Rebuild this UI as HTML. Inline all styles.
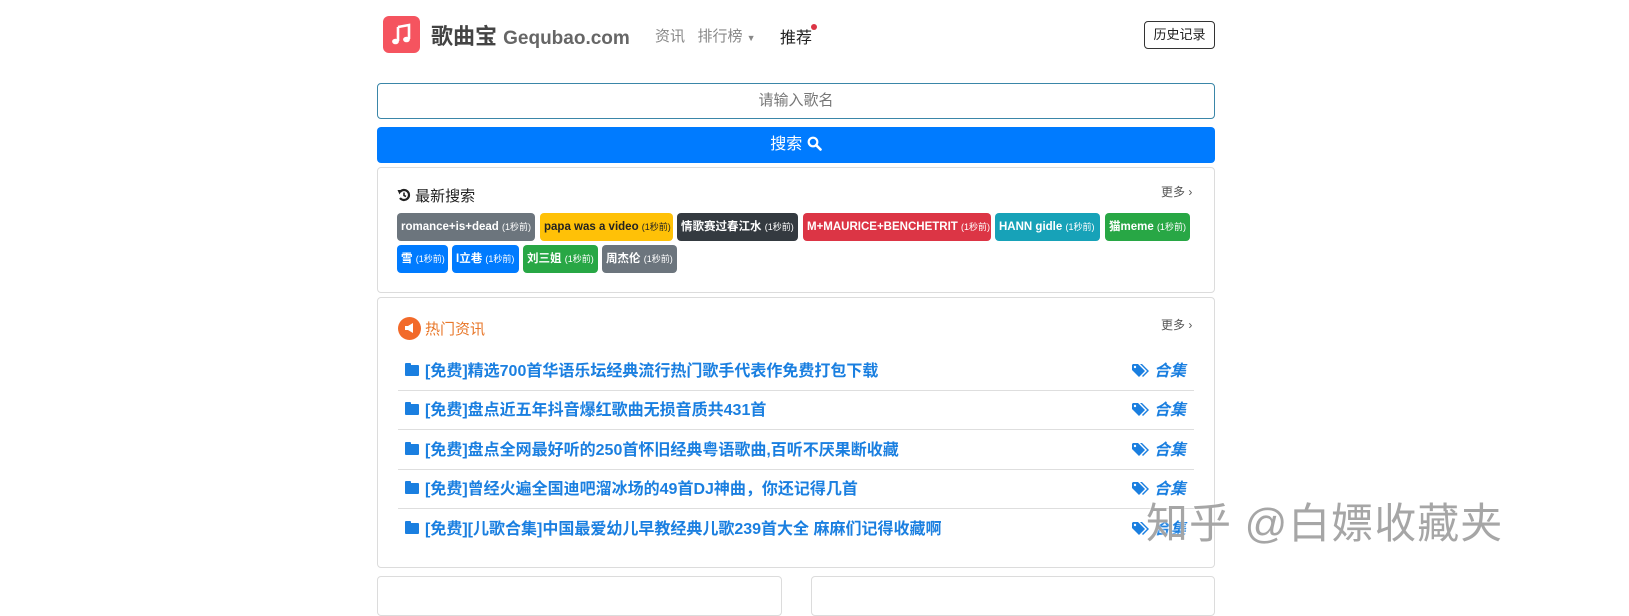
<!DOCTYPE html><html><head><meta charset="utf-8"><style>
*{margin:0;padding:0;box-sizing:border-box}
body{width:1629px;height:604px;background:#fff;font-family:"Liberation Sans","Noto Sans CJK SC",sans-serif;position:relative;overflow:hidden}
.a{position:absolute}
.card{position:absolute;border:1px solid #dcdcdc;border-radius:4px;background:#fff}
.tag{position:absolute;height:28px;border-radius:4px;color:#fff;font-size:11.5px;font-weight:bold;line-height:28px;padding-left:4px;white-space:nowrap;overflow:hidden}
.tag small{font-size:9px;font-weight:normal}
.row{position:absolute;left:398px;width:796px;height:39px;border-bottom:1px solid #dedede;color:#1a7fe0;font-weight:bold;font-size:16px;line-height:39px}
.row .r{position:absolute;right:8px;top:0;font-style:italic}
.row .r svg{vertical-align:-2px;margin-right:4px}
.fold{display:inline-block;width:14px;height:11px;background:#1a7fe0;border-radius:1px;margin:0 6px 0 7px;position:relative;top:0px}
.fold:before{content:"";position:absolute;left:0;top:-2px;width:6px;height:3px;background:#1a7fe0;border-radius:1px 1px 0 0}
</style></head><body>
<div class="a" style="left:383px;top:16px;width:37px;height:37px;background:#f5545f;border-radius:6px"><svg width="37" height="37" viewBox="0 0 37 37"><path d="M15 11 L26 9 V23" stroke="#fff" stroke-width="2.6" fill="none"/><path d="M15 11 V25" stroke="#fff" stroke-width="2.6"/><ellipse cx="12.5" cy="25.5" rx="3.4" ry="2.8" fill="#fff"/><ellipse cx="23.5" cy="23.5" rx="3.4" ry="2.8" fill="#fff"/></svg></div>
<div class="a" style="left:431px;top:19px;font-size:22px;font-weight:bold;color:#444">歌曲宝 <span style="font-size:19px;color:#666">Gequbao.com</span></div>
<div class="a" style="left:655px;top:25px;font-size:15px;color:#888">资讯&nbsp;&nbsp;&nbsp;排行榜 <span style="font-size:9px">▼</span></div>
<div class="a" style="left:780px;top:24px;font-size:16px;color:#222">推荐</div>
<div class="a" style="left:811px;top:24px;width:6px;height:6px;border-radius:50%;background:#dc3545"></div>
<div class="a" style="left:1144px;top:21px;width:71px;height:28px;border:1px solid #333;border-radius:4px;font-size:13px;text-align:center;line-height:26px;color:#222">历史记录</div>
<div class="a" style="left:377px;top:83px;width:838px;height:36px;border:1px solid #3a86a8;border-radius:4px;font-size:15px;color:#777;text-align:center;line-height:34px">请输入歌名</div>
<div class="a" style="left:377px;top:127px;width:838px;height:36px;background:#007bff;border-radius:4px;font-size:16px;color:#fff;text-align:center;line-height:36px">搜索 <svg width="15" height="15" viewBox="0 0 15 15" style="vertical-align:-2px"><circle cx="6" cy="6" r="4.3" stroke="#fff" stroke-width="2.2" fill="none"/><path d="M9.2 9.2 L13.5 13.5" stroke="#fff" stroke-width="2.6" stroke-linecap="round"/></svg></div>
<div class="card" style="left:377px;top:167px;width:838px;height:126px"></div>
<div class="a" style="left:397px;top:185px;font-size:15px;color:#222"><svg width="14" height="14" viewBox="0 0 14 14" style="vertical-align:-1px"><path d="M3 4 A5 5 0 1 1 3 10" stroke="#222" stroke-width="2.2" fill="none"/><path d="M0.5 2 L5 2 L2.5 6.5 Z" fill="#222"/><path d="M7 4.5 V7.5 L9 8.5" stroke="#222" stroke-width="1.6" fill="none"/></svg> 最新搜索</div>
<div class="a" style="left:1161px;top:183px;font-size:12px;color:#555">更多 ›</div>
<div class="tag" style="left:397px;top:213px;width:138px;background:#6c757d">romance+is+dead <small>(1秒前)</small></div>
<div class="tag" style="left:540px;top:213px;width:133px;background:#ffc107;color:#222">papa was a video <small>(1秒前)</small></div>
<div class="tag" style="left:677px;top:213px;width:121px;background:#343a40">情歌赛过春江水 <small>(1秒前)</small></div>
<div class="tag" style="left:803px;top:213px;width:188px;background:#dc3545">M+MAURICE+BENCHETRIT <small>(1秒前)</small></div>
<div class="tag" style="left:995px;top:213px;width:105px;background:#17a2b8">HANN gidle <small>(1秒前)</small></div>
<div class="tag" style="left:1105px;top:213px;width:85px;background:#28a745">猫meme <small>(1秒前)</small></div>
<div class="tag" style="left:397px;top:245px;width:51px;background:#007bff">雪 <small>(1秒前)</small></div>
<div class="tag" style="left:452px;top:245px;width:67px;background:#007bff">I立巷 <small>(1秒前)</small></div>
<div class="tag" style="left:523px;top:245px;width:75px;background:#28a745">刘三姐 <small>(1秒前)</small></div>
<div class="tag" style="left:602px;top:245px;width:75px;background:#6c757d">周杰伦 <small>(1秒前)</small></div>
<div class="card" style="left:377px;top:297px;width:838px;height:271px"></div>
<div class="a" style="left:398px;top:317px;width:23px;height:23px;border-radius:50%;background:#f26a2a"><svg width="23" height="23" viewBox="0 0 23 23"><path d="M7 9 H10 L15 6 V16 L10 13 H7 Z" fill="#fff"/></svg></div>
<div class="a" style="left:425px;top:318px;font-size:15px;color:#e8772a">热门资讯</div>
<div class="a" style="left:1161px;top:316px;font-size:12px;color:#555">更多 ›</div>
<div class="row" style="top:352px"><span class="fold"></span>[免费]精选700首华语乐坛经典流行热门歌手代表作免费打包下载<span class="r"><svg width="18" height="14" viewBox="0 0 18 14"><path d="M0 1 V6 L7 13 L13 7 L6 0 H1 Z" fill="#1a7fe0"/><circle cx="3" cy="3" r="1.2" fill="#fff"/><path d="M8 0 H10 L17 7 L11 13 L10 12 L15 7 Z" fill="#1a7fe0"/></svg>合集</span></div>
<div class="row" style="top:391px"><span class="fold"></span>[免费]盘点近五年抖音爆红歌曲无损音质共431首<span class="r"><svg width="18" height="14" viewBox="0 0 18 14"><path d="M0 1 V6 L7 13 L13 7 L6 0 H1 Z" fill="#1a7fe0"/><circle cx="3" cy="3" r="1.2" fill="#fff"/><path d="M8 0 H10 L17 7 L11 13 L10 12 L15 7 Z" fill="#1a7fe0"/></svg>合集</span></div>
<div class="row" style="top:431px"><span class="fold"></span>[免费]盘点全网最好听的250首怀旧经典粤语歌曲,百听不厌果断收藏<span class="r"><svg width="18" height="14" viewBox="0 0 18 14"><path d="M0 1 V6 L7 13 L13 7 L6 0 H1 Z" fill="#1a7fe0"/><circle cx="3" cy="3" r="1.2" fill="#fff"/><path d="M8 0 H10 L17 7 L11 13 L10 12 L15 7 Z" fill="#1a7fe0"/></svg>合集</span></div>
<div class="row" style="top:470px"><span class="fold"></span>[免费]曾经火遍全国迪吧溜冰场的49首DJ神曲，你还记得几首<span class="r"><svg width="18" height="14" viewBox="0 0 18 14"><path d="M0 1 V6 L7 13 L13 7 L6 0 H1 Z" fill="#1a7fe0"/><circle cx="3" cy="3" r="1.2" fill="#fff"/><path d="M8 0 H10 L17 7 L11 13 L10 12 L15 7 Z" fill="#1a7fe0"/></svg>合集</span></div>
<div class="row" style="top:510px;border-bottom:none"><span class="fold"></span>[免费][儿歌合集]中国最爱幼儿早教经典儿歌239首大全 麻麻们记得收藏啊<span class="r"><svg width="18" height="14" viewBox="0 0 18 14"><path d="M0 1 V6 L7 13 L13 7 L6 0 H1 Z" fill="#1a7fe0"/><circle cx="3" cy="3" r="1.2" fill="#fff"/><path d="M8 0 H10 L17 7 L11 13 L10 12 L15 7 Z" fill="#1a7fe0"/></svg>合集</span></div>
<div class="card" style="left:377px;top:576px;width:405px;height:40px"></div>
<div class="card" style="left:811px;top:576px;width:404px;height:40px"></div>
<div class="a" style="left:1146px;top:490px;font-size:42px;color:rgba(150,150,150,.85);letter-spacing:1px;text-shadow:0 0 2px #fff">知乎 @白嫖收藏夹</div>
</body></html>
